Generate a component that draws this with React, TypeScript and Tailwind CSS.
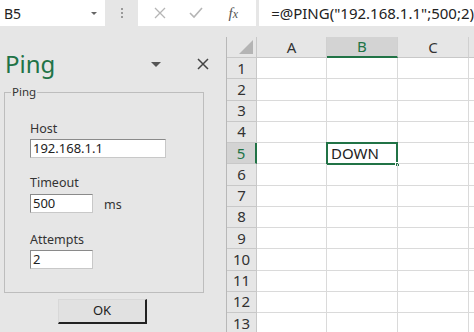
const cols = ["A", "B", "C", "D"];
const rows = [1, 2, 3, 4, 5, 6, 7, 8, 9, 10, 11, 12, 13];

function Field({ label, value, w, suffix }: { label: string; value: string; w: string; suffix?: string }) {
  return (
    <div className="flex flex-col">
      <span className="text-[12.5px] leading-[14px] text-[#333]">{label}</span>
      <div className="flex items-center mt-[3px]">
        <div className={`${w} h-[19px] bg-white border border-[#c8c8c8] border-t-[#8a8a8a] border-l-[#8a8a8a] pl-[2px] text-[13px] leading-[17px] text-[#222]`}>
          {value}
        </div>
        {suffix && <span className="ml-[11px] mt-[3px] text-[12.5px] text-[#333]">{suffix}</span>}
      </div>
    </div>
  );
}

export default function App() {
  return (
    <div className="w-[474px] h-[332px] overflow-hidden bg-[#e6e6e6] font-['Noto_Sans','Open_Sans',sans-serif] text-[#222]">
      {/* formula bar */}
      <div className="flex h-[26px]">
        <div className="w-[108px] bg-white flex items-center justify-between pl-[4px] pr-[8px]">
          <span className="text-[14px]">B5</span>
          <span className="w-0 h-0 border-l-[3px] border-r-[3px] border-t-[3px] border-l-transparent border-r-transparent border-t-[#666]" />
        </div>
        <div className="w-[34px] flex flex-col items-center justify-center gap-[2px]">
          <span className="w-[2px] h-[2px] bg-[#999]" />
          <span className="w-[2px] h-[2px] bg-[#999]" />
          <span className="w-[2px] h-[2px] bg-[#999]" />
        </div>
        <div className="w-[121px] bg-white flex items-center">
          <svg width="14" height="14" viewBox="0 0 14 14" className="ml-[15px]">
            <path d="M2 2L12 12M12 2L2 12" stroke="#b5b5b5" strokeWidth="1.3" />
          </svg>
          <svg width="14" height="12" viewBox="0 0 14 12" className="ml-[22px]">
            <path d="M1 6L5 10L13 1" stroke="#b5b5b5" strokeWidth="1.6" fill="none" />
          </svg>
          <span className="ml-[25px] font-['Liberation_Serif',serif] italic text-[15px] text-[#555]">
            f<span className="text-[12px]">x</span>
          </span>
        </div>
        <div className="ml-[3px] flex-1 bg-white flex items-center pl-[12px] text-[15px]">
          =@PING("192.168.1.1";500;2)
        </div>
      </div>

      <div className="flex">
        {/* task pane */}
        <div className="w-[226px] shrink-0">
          <div className="flex items-center h-[58px] pt-[18px] pl-[5px]">
            <span className="text-[24px] text-[#217346] leading-none">Ping</span>
            <span className="ml-auto w-0 h-0 border-l-[5px] border-r-[5px] border-t-[5px] border-l-transparent border-r-transparent border-t-[#555]" />
            <svg width="12" height="12" viewBox="0 0 12 12" className="ml-[36px] mr-[17px]">
              <path d="M1 1L11 11M11 1L1 11" stroke="#444" strokeWidth="1.5" />
            </svg>
          </div>
          <fieldset className="ml-[4px] mt-[2px] w-[200px] h-[207px] border border-[#bdbdbd] pl-[4px]">
            <legend className="ml-[2px] px-[1px] text-[11.5px] leading-[12px] text-[#333]">Ping</legend>
            <div className="pl-[21px] pt-[24px] flex flex-col gap-[18px]">
              <Field label="Host" value="192.168.1.1" w="w-[136px]" />
              <Field label="Timeout" value="500" w="w-[63px]" suffix="ms" />
              <Field label="Attempts" value="2" w="w-[63px]" />
            </div>
          </fieldset>
          <div className="ml-[58px] mt-[6px] w-[89px] h-[25px] bg-[#e1e1e1] border-t border-l border-[#d8d8d8] border-r-2 border-b-2 border-r-[#222] border-b-[#222] flex items-center justify-center text-[13px]">
            OK
          </div>
        </div>

        {/* sheet */}
        <div className="flex-1 mt-[11px] bg-white border-l border-[#b8b8b8]">
          <div className="flex h-[21px]">
            <div className="w-[30px] shrink-0 bg-[#e6e6e6] border-r border-b border-[#c8c8c8] relative">
              <svg width="14" height="14" viewBox="0 0 14 14" className="absolute right-[3px] bottom-[3px]">
                <path d="M14 0V14H0Z" fill="#b4b4b4" />
              </svg>
            </div>
            {cols.map((c) => (
              <div
                key={c}
                className={`${c === "D" ? "w-[40px]" : c === "A" ? "w-[70px]" : "w-[71px]"} shrink-0 flex items-center justify-center text-[15px] border-r border-[#d0d0d0] ${
                  c === "B" ? "bg-[#d3d3d3] border-b-2 border-b-[#217346] text-[#217346]" : "bg-[#e6e6e6] border-b border-b-[#c8c8c8] text-[#333]"
                }`}
              >
                {c !== "D" ? c : ""}
              </div>
            ))}
          </div>
          {rows.map((r) => (
            <div key={r} className="flex h-[21.25px]">
              <div
                className={`w-[30px] shrink-0 flex items-center justify-center text-[15px] leading-none border-b border-[#c8c8c8] ${
                  r === 5 ? "bg-[#d3d3d3] border-r-2 border-r-[#217346] text-[#217346]" : "bg-[#e6e6e6] border-r border-r-[#c8c8c8] text-[#333]"
                }`}
              >
                {r}
              </div>
              {cols.map((c) => (
                <div
                  key={c}
                  className={`${c === "D" ? "w-[40px]" : c === "A" ? "w-[70px]" : "w-[71px]"} shrink-0 border-r border-b border-[#dadada] relative`}
                >
                  {r === 5 && c === "B" && (
                    <div className="absolute -left-[1px] -top-[1px] w-[72px] h-[23px] border-2 border-[#217346] flex items-center pl-[3px] text-[15px] text-[#222]">
                      DOWN
                      <span className="absolute -right-[4px] -bottom-[4px] w-[5px] h-[5px] bg-[#217346] border border-white" />
                    </div>
                  )}
                </div>
              ))}
            </div>
          ))}
        </div>
      </div>
    </div>
  );
}
